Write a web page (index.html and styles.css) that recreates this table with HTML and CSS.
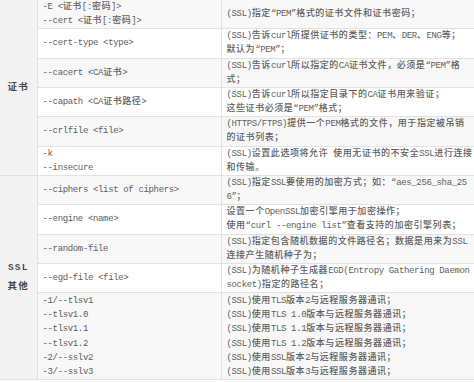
FILE: index.html
```html
<!DOCTYPE html>
<html lang="zh-CN">
<head>
<meta charset="utf-8">
<link rel="stylesheet" href="styles.css">
</head>
<body>
<table class="opts">
  <colgroup><col class="c-cat"><col class="c-opt"><col class="c-desc"></colgroup>
  <tbody>
    <tr class="odd">
      <td class="cat" rowspan="6">证书</td>
      <td class="opt">-E &lt;<span class="z">证书</span>[:<span class="z">密码</span>]&gt;<br>--cert &lt;<span class="z">证书</span>[:<span class="z">密码</span>]&gt;</td>
      <td class="desc">(SSL)<span class="z">指定</span>“PEM”<span class="z">格式的证书文件和证书密码；</span></td>
    </tr>
    <tr class="even">
      <td class="opt">--cert-type &lt;type&gt;</td>
      <td class="desc">(SSL)<span class="z">告诉</span>curl<span class="z">所提供证书的类型：</span>PEM<span class="z">、</span>DER<span class="z">、</span>ENG<span class="z">等；</span><br><span class="z">默认为</span>“PEM”<span class="z">；</span></td>
    </tr>
    <tr class="odd">
      <td class="opt">--cacert &lt;CA<span class="z">证书</span>&gt;</td>
      <td class="desc">(SSL)<span class="z">告诉</span>curl<span class="z">所以指定的</span>CA<span class="z">证书文件，必须是</span>“PEM”<span class="z">格</span><br><span class="z">式；</span></td>
    </tr>
    <tr class="even">
      <td class="opt">--capath &lt;CA<span class="z">证书路径</span>&gt;</td>
      <td class="desc">(SSL)<span class="z">告诉</span>curl<span class="z">所以指定目录下的</span>CA<span class="z">证书用来验证；</span><br><span class="z">这些证书必须是</span>“PEM”<span class="z">格式；</span></td>
    </tr>
    <tr class="odd">
      <td class="opt">--crlfile &lt;file&gt;</td>
      <td class="desc">(HTTPS/FTPS)<span class="z">提供一个</span>PEM<span class="z">格式的文件，用于指定被吊销</span><br><span class="z">的证书列表；</span></td>
    </tr>
    <tr class="even">
      <td class="opt">-k<br>--insecure</td>
      <td class="desc">(SSL)<span class="z">设置此选项将允许</span> <span class="z">使用无证书的不安全</span>SSL<span class="z">进行连接</span><br><span class="z">和传输。</span></td>
    </tr>
    <tr class="odd">
      <td class="cat" rowspan="5">SSL<br>其他</td>
      <td class="opt">--ciphers &lt;list of ciphers&gt;</td>
      <td class="desc">(SSL)<span class="z">指定</span>SSL<span class="z">要使用的加密方式；如：</span>“aes_256_sha_25<br>6”<span class="z">；</span></td>
    </tr>
    <tr class="even">
      <td class="opt">--engine &lt;name&gt;</td>
      <td class="desc"><span class="z">设置一个</span>OpenSSL<span class="z">加密引擎用于加密操作；</span><br><span class="z">使用</span>“curl --engine list”<span class="z">查看支持的加密引擎列表；</span></td>
    </tr>
    <tr class="odd">
      <td class="opt">--random-file</td>
      <td class="desc">(SSL)<span class="z">指定包含随机数据的文件路径名；数据是用来为</span>SSL<br><span class="z">连接产生随机种子为；</span></td>
    </tr>
    <tr class="even">
      <td class="opt">--egd-file &lt;file&gt;</td>
      <td class="desc">(SSL)<span class="z">为随机种子生成器</span>EGD(Entropy Gathering Daemon<br>socket)<span class="z">指定的路径名；</span></td>
    </tr>
    <tr class="odd">
      <td class="opt top">-1/--tlsv1<br>--tlsv1.0<br>--tlsv1.1<br>--tlsv1.2<br>-2/--sslv2<br>-3/--sslv3</td>
      <td class="desc top">(SSL)<span class="z">使用</span>TLS<span class="z">版本</span>2<span class="z">与远程服务器通讯；</span><br>(SSL)<span class="z">使用</span>TLS 1.0<span class="z">版本与远程服务器通讯；</span><br>(SSL)<span class="z">使用</span>TLS 1.1<span class="z">版本与远程服务器通讯；</span><br>(SSL)<span class="z">使用</span>TLS 1.2<span class="z">版本与远程服务器通讯；</span><br>(SSL)<span class="z">使用</span>SSL<span class="z">版本</span>2<span class="z">与远程服务器通讯；</span><br>(SSL)<span class="z">使用</span>SSL<span class="z">版本</span>3<span class="z">与远程服务器通讯；</span></td>
    </tr>
  </tbody>
</table>
</body>
</html>
```

FILE: styles.css
```css
html, body {
  margin: 0;
  padding: 0;
  background: #ffffff;
  overflow: hidden;
}
body {
  width: 474px;
  height: 382px;
}
.opts {
  border-collapse: collapse;
  table-layout: fixed;
  width: 560px;
  font-family: "Liberation Mono", "Noto Sans CJK SC", monospace;
  font-size: 9px;
  letter-spacing: -0.35px;
  color: #606060;
}
.c-cat { width: 37px; }
.c-opt { width: 184px; }
.c-desc { width: 339px; }
.opts td {
  border: 1px solid #e2e2e2;
  padding: 0 5px;
  line-height: 14.15px;
  white-space: nowrap;
  vertical-align: middle;
  overflow: hidden;
}
.opts .z {
  font-family: "Noto Sans CJK SC", sans-serif;
  letter-spacing: 0.55px;
  font-weight: 500;
  line-height: 1;
}
.opts tr:first-child td { border-top: none; }
.opts td.cat {
  border-left: none;
  background: #f3f3f3;
  text-align: center;
  padding: 0;
  font-size: 9.5px;
  letter-spacing: 1.2px;
  line-height: 19px;
  color: #4a4a4a;
  font-weight: 600;
}
.odd td { background: #f8f8f8; }
.even td { background: #ffffff; }
.opts td.top { padding-top: 1px; }
```
